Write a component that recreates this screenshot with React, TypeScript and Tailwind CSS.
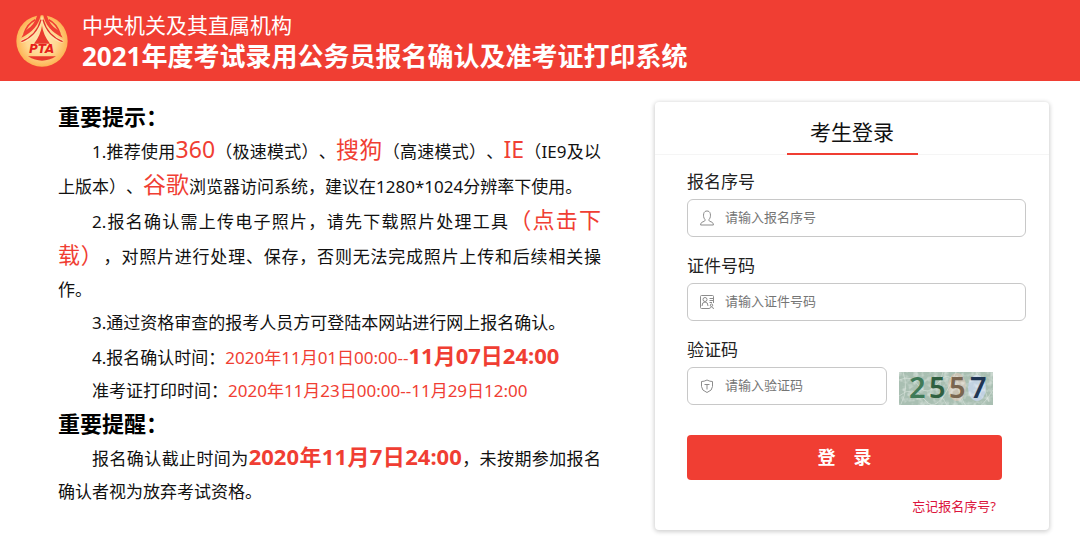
import type { ReactNode } from 'react';

const Logo = () => (
  <svg viewBox="0 0 156 156" className="h-[52px] w-[52px] shrink-0" role="img" aria-label="PTA">
    <defs>
      <radialGradient id="gold" cx="50%" cy="50%" r="50%">
        <stop offset="0" stopColor="#ffeabb" />
        <stop offset="0.6" stopColor="#ffd78e" />
        <stop offset="1" stopColor="#fdb455" />
      </radialGradient>
    </defs>
    <circle cx="78" cy="78" r="77" fill="url(#gold)" />
    {/* Gaps between the ring and the roof */}
    <path d="M64 0 H74 Q66 44 16 68 Q22 54 30 46 Q56 30 64 0 Z" fill="#f03f33" />
    <path d="M92 0 H82 Q90 44 140 68 Q134 54 126 46 Q100 30 92 0 Z" fill="#f03f33" />
    <path d="M58 14 Q34 26 24 56 M98 14 Q122 26 132 56" fill="none" stroke="#f03f33" strokeWidth="5" />
    {/* Roof */}
    <path d="M78 0 Q68 56 14 76 L16 84 Q62 74 78 24 Q94 74 140 84 L142 76 Q88 56 78 0 Z" fill="#ffe3ad" />
    <path d="M75 14 Q62 62 16 80 M81 14 Q94 62 140 80" fill="none" stroke="#e0362b" strokeWidth="4" />
    {/* Tower */}
    <path d="M78 32 Q74 60 54 86 H102 Q82 60 78 32 Z" fill="#e9392d" />
    <text
      x="77"
      y="115"
      textAnchor="middle"
      fontFamily="'DejaVu Sans', sans-serif"
      fontSize="36"
      fontWeight="bold"
      fontStyle="italic"
      fill="#e6211b"
    >
      PTA
    </text>
    <path d="M36 124 H120 Q78 150 36 124 Z" fill="#e9392d" />
  </svg>
);

const UserIcon = () => (
  <svg viewBox="0 0 16 16" className="h-4 w-4 shrink-0" fill="none" stroke="#8c8c8c" strokeWidth="1">
    <path d="M6 9.5 C4.5 8 4.3 5.5 4.7 3.7 C5.2 1.6 6.5 1 8 1 S10.8 1.6 11.3 3.7 C11.7 5.5 11.5 8 10 9.5 C9.6 10.8 10.5 11.3 12 11.8 C13.7 12.4 14.2 13 14.4 15 H1.6 C1.8 13 2.3 12.4 4 11.8 C5.5 11.3 6.4 10.8 6 9.5 Z" />
  </svg>
);

const IdCardIcon = () => (
  <svg viewBox="0 0 16 16" className="h-4 w-4 shrink-0" fill="none" stroke="#8c8c8c" strokeWidth="1">
    <path d="M10 14.5 H2.5 Q1.5 14.5 1.5 13.5 V2.5 Q1.5 1.5 2.5 1.5 H13.5 Q14.5 1.5 14.5 2.5 V9" />
    <circle cx="6" cy="5.5" r="2" />
    <path d="M3 12 Q3 8 6 8 Q9 8 9 12 M10.5 4.5 H14 M10.5 6.5 H14 M10.5 8.5 H13" />
    <circle cx="12.5" cy="11.2" r="1.2" />
    <path d="M10.5 15 Q10.8 12.9 12.5 12.9 Q14.2 12.9 14.5 15" />
  </svg>
);

const ShieldIcon = () => (
  <svg viewBox="0 0 16 16" className="h-4 w-4 shrink-0" fill="none" stroke="#8c8c8c" strokeWidth="1">
    <path d="M8 2 Q11 3.6 13.5 3.5 V8.5 Q13.5 12.5 8 14.5 Q2.5 12.5 2.5 8.5 V3.5 Q5 3.6 8 2 Z" />
    <path d="M5.5 6.5 H10.5 M8 6.5 V11.5" />
  </svg>
);

const captchaDigits = [
  { char: '2', x: 10, color: '#3f7a58' },
  { char: '5', x: 30, color: '#2f5f40' },
  { char: '5', x: 50, color: '#7a6650' },
  { char: '7', x: 71, color: '#1f3654' },
];

const Captcha = () => (
  <svg viewBox="0 0 94 33" className="h-[33px] w-[94px] shrink-0 overflow-visible" role="img" aria-label="2557">
    <defs>
      <filter id="grain" x="0" y="0" width="100%" height="100%">
        <feTurbulence type="fractalNoise" baseFrequency="0.2" numOctaves="2" seed="4" />
        <feColorMatrix values="0 0 0 0 1  0 0 0 0 1  0 0 0 0 1  3 0 0 0 -1.3" />
      </filter>
      <clipPath id="frame">
        <rect width="94" height="33" />
      </clipPath>
    </defs>
    <g clipPath="url(#frame)">
      <rect width="94" height="33" fill="#a9bfb2" />
      <ellipse cx="58" cy="15" rx="9" ry="14" fill="#d9c4b4" opacity="0.7" />
      <ellipse cx="78" cy="16" rx="9" ry="13" fill="#c3d3e6" opacity="0.9" />
      <rect width="94" height="33" filter="url(#grain)" opacity="0.4" />
      <path
        d="M0 8 Q12 2 20 14 T40 10 T62 24 T94 18 M0 24 Q14 12 26 28 T54 6 T90 30 M4 0 Q10 16 2 32 M44 0 Q36 18 48 33"
        fill="none"
        stroke="#e3ece6"
        strokeWidth="1"
        opacity="0.5"
      />
    </g>
    {captchaDigits.map((digit) => (
      <text
        key={digit.x}
        x={digit.x}
        y="26"
        fontFamily="'Noto Sans', sans-serif"
        fontSize="29"
        fontWeight="600"
        fill={digit.color}
      >
        {digit.char}
      </text>
    ))}
  </svg>
);

type FieldProps = {
  id: string;
  label: string;
  placeholder: string;
  icon: ReactNode;
  extra?: ReactNode;
};

const Field = ({ id, label, placeholder, icon, extra }: FieldProps) => (
  <div>
    <label htmlFor={id} className="block text-[17px] leading-[34px] text-[#222]">
      {label}
    </label>
    <div className="flex items-end gap-3">
      <div className="flex h-[38px] min-w-0 flex-1 items-center gap-[10px] rounded-md border border-[#c8c8c8] px-[11px]">
        {icon}
        <input
          id={id}
          type="text"
          placeholder={placeholder}
          className="min-w-0 flex-1 bg-transparent text-[13px] text-[#333] outline-none placeholder:text-[#757575]"
        />
      </div>
      {extra}
    </div>
  </div>
);

const Red = ({ children }: { children: ReactNode }) => (
  <span className="text-[23px] text-[#f03e33]">{children}</span>
);

const Notice = () => (
  <section className="min-w-0 flex-1 text-justify text-[17px] leading-[33px] text-[#111] [text-spacing-trim:space-all]">
    <h2 className="text-[22px] font-bold leading-[33px] text-black">重要提示：</h2>
    <p className="indent-[2em]">
      1.推荐使用<Red>360</Red>（极速模式）、<Red>搜狗</Red>（高速模式）、<Red>IE</Red>（IE9及以上版本）、
      <Red>谷歌</Red>浏览器访问系统，建议在1280*1024分辨率下使用。
    </p>
    <p className="indent-[2em]">
      2.报名确认需上传电子照片，请先下载照片处理工具
      <a href="#tool" className="text-[22px] text-[#f03e33]">（点击下载）</a>
      ，对照片进行处理、保存，否则无法完成照片上传和后续相关操作。
    </p>
    <p className="indent-[2em]">3.通过资格审查的报考人员方可登陆本网站进行网上报名确认。</p>
    <p className="indent-[2em]">
      4.报名确认时间：
      <span className="text-[#f03e33]">
        2020年11月01日00:00--<b className="text-[22px]">11月07日24:00</b>
      </span>
    </p>
    <p className="indent-[2em]">
      准考证打印时间：<span className="text-[#f03e33]">2020年11月23日00:00--11月29日12:00</span>
    </p>
    <h2 className="text-[22px] font-bold leading-[33px] text-black">重要提醒：</h2>
    <p className="indent-[2em]">
      报名确认截止时间为<b className="text-[22px] text-[#f03e33]">2020年11月7日24:00</b>
      ，未按期参加报名确认者视为放弃考试资格。
    </p>
  </section>
);

const LoginCard = () => (
  <section className="mt-0.5 w-[394px] shrink-0 rounded bg-white pb-3.5 shadow-[0_1px_4px_1px_rgba(0,0,0,0.18)]">
    <div className="flex justify-center border-b border-[#f5f5f5]">
      <h2 className="-mb-px w-[131px] border-b-2 border-[#f03e33] pt-2.5 pb-px text-center text-[21px] leading-10 text-[#111]">
        考生登录
      </h2>
    </div>
    <form className="pt-2.5 pr-[23px] pl-8" onSubmit={(e) => e.preventDefault()}>
      <div className="flex flex-col gap-3">
        <Field id="signup-no" label="报名序号" placeholder="请输入报名序号" icon={<UserIcon />} />
        <Field id="id-no" label="证件号码" placeholder="请输入证件号码" icon={<IdCardIcon />} />
        <div className="pr-[33px]">
          <Field id="captcha" label="验证码" placeholder="请输入验证码" icon={<ShieldIcon />} extra={<Captcha />} />
        </div>
      </div>
      <div className="pr-6">
        <button
          type="submit"
          className="mt-[30px] block h-[45px] w-full rounded bg-[#f03e33] text-[18px] font-bold text-white"
        >
          登&emsp;录
        </button>
        <div className="mt-4 pr-1.5 text-right text-[13px] leading-5">
          <a href="#forgot" className="text-[#dc143c]">忘记报名序号?</a>
        </div>
      </div>
    </form>
  </section>
);

const App = () => {
  return (
    <div className="min-h-screen bg-white font-['Noto_Sans','Noto_Sans_CJK_SC',sans-serif]">
      <header className="flex h-[81px] items-center gap-3.5 bg-[#f03e33] pl-4 text-white">
        <Logo />
        <div>
          <p className="text-[21px] leading-[30px]">中央机关及其直属机构</p>
          <h1 className="text-[26px] font-bold leading-8">2021年度考试录用公务员报名确认及准考证打印系统</h1>
        </div>
      </header>
      <main className="flex items-start gap-[54px] pt-[19px] pr-[31px] pl-[58px]">
        <Notice />
        <LoginCard />
      </main>
    </div>
  );
};

export default App;
